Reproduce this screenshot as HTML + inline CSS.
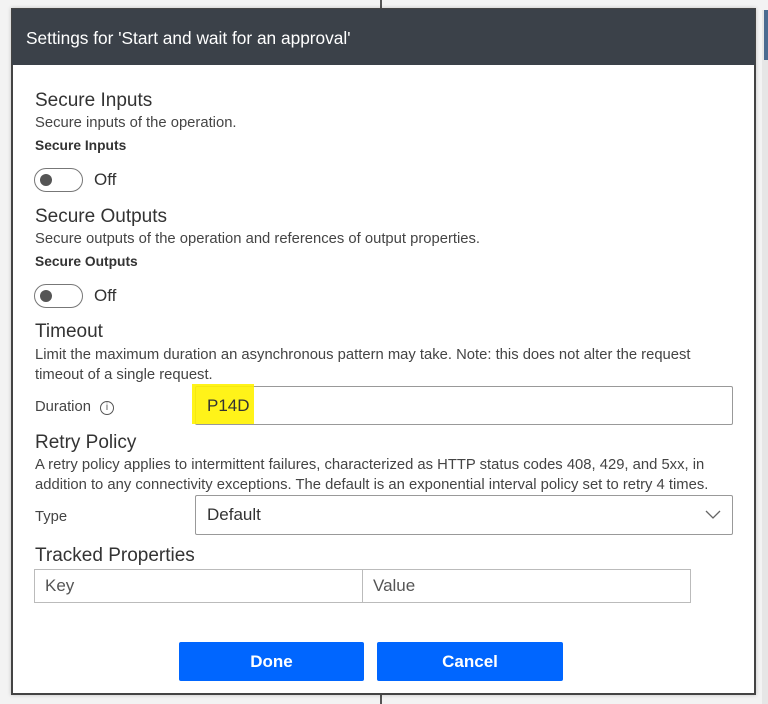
<!DOCTYPE html>
<html><head><style>
body{margin:0;width:768px;height:704px;background:#f3f3f3;position:relative;overflow:hidden;font-family:"Liberation Sans",sans-serif;color:#333}
.a{position:absolute;white-space:nowrap}
.h{font-size:19px;color:#333}
.d{font-size:14.8px;color:#444}
.b{font-size:13.8px;font-weight:bold;color:#333}
.tg{position:absolute;width:47px;height:22px;border:1px solid #777;border-radius:12px;background:#fff}
.tg:after{content:"";position:absolute;left:5px;top:5px;width:12px;height:12px;border-radius:50%;background:#555}
.box{position:absolute;border:1px solid #999;border-radius:2px;background:#fff}
.btn{position:absolute;background:#0066ff;color:#fff;font-weight:bold;font-size:17px;text-align:center;line-height:39px;border-radius:2px}
</style></head><body>
<div class="a" style="left:762px;top:10px;width:6px;height:694px;background:#e6e6e6"></div>
<div class="a" style="left:764px;top:10px;width:4px;height:50px;background:#4a6a90"></div>
<div class="a" style="left:380px;top:0;width:2px;height:9px;background:#555"></div>
<div class="a" style="left:380px;top:693px;width:2px;height:11px;background:#555"></div>
<div class="a" style="left:11px;top:8px;width:741px;height:683px;border:2px solid #444;background:#fff;box-shadow:0 0 4px rgba(0,0,0,.2)"></div>
<div class="a" style="left:12px;top:9px;width:743px;height:56px;background:#3b4149"></div>
<div class="a" style="left:26px;top:28px;font-size:17.3px;color:#fff">Settings for 'Start and wait for an approval'</div>

<div class="a h" style="left:35px;top:90px">Secure Inputs</div>
<div class="a d" style="left:35px;top:115px">Secure inputs of the operation.</div>
<div class="a b" style="left:35px;top:138px">Secure Inputs</div>
<div class="tg" style="left:34px;top:168px"></div>
<div class="a" style="left:94px;top:170px;font-size:17px">Off</div>

<div class="a h" style="left:35px;top:206px">Secure Outputs</div>
<div class="a d" style="left:35px;top:231px">Secure outputs of the operation and references of output properties.</div>
<div class="a b" style="left:35px;top:254px">Secure Outputs</div>
<div class="tg" style="left:34px;top:284px"></div>
<div class="a" style="left:94px;top:286px;font-size:17px">Off</div>

<div class="a h" style="left:35px;top:321px">Timeout</div>
<div class="a d" style="left:35px;top:347px">Limit the maximum duration an asynchronous pattern may take. Note: this does not alter the request</div>
<div class="a d" style="left:35px;top:367px">timeout of a single request.</div>
<div class="a d" style="left:35px;top:399px">Duration</div>
<div class="a" style="left:100px;top:401px;width:12px;height:12px;border:1px solid #555;border-radius:50%;font-size:10px;text-align:center;line-height:12px;color:#555">i</div>
<div class="box" style="left:195px;top:386px;width:536px;height:37px"></div>
<div class="a" style="left:192px;top:384px;width:62px;height:40px;background:#fff200;opacity:.9"></div>
<div class="a" style="left:207px;top:396px;font-size:17px;color:#333">P14D</div>

<div class="a h" style="left:35px;top:432px">Retry Policy</div>
<div class="a d" style="left:35px;top:457px">A retry policy applies to intermittent failures, characterized as HTTP status codes 408, 429, and 5xx, in</div>
<div class="a d" style="left:35px;top:477px">addition to any connectivity exceptions. The default is an exponential interval policy set to retry 4 times.</div>
<div class="a d" style="left:35px;top:509px">Type</div>
<div class="box" style="left:195px;top:495px;width:536px;height:38px"></div>
<div class="a" style="left:207px;top:505px;font-size:17px">Default</div>
<svg class="a" style="left:705px;top:510px" width="16" height="10"><path d="M1 1 L8 8 L15 1" fill="none" stroke="#666" stroke-width="1.3"/></svg>

<div class="a h" style="left:35px;top:545px">Tracked Properties</div>
<div class="a" style="left:34px;top:569px;width:655px;height:32px;border:1px solid #bbb"></div>
<div class="a" style="left:362px;top:569px;width:1px;height:34px;background:#bbb"></div>
<div class="a" style="left:45px;top:576px;font-size:17px;color:#555">Key</div>
<div class="a" style="left:373px;top:576px;font-size:17px;color:#555">Value</div>

<div class="btn" style="left:179px;top:642px;width:185px;height:39px">Done</div>
<div class="btn" style="left:377px;top:642px;width:186px;height:39px">Cancel</div>
</body></html>
